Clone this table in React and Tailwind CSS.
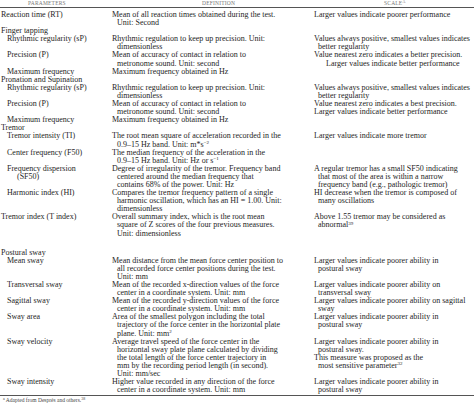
const rows = [
  { p: ["Reaction time (RT)"], lvl: 0, d: ["Mean of all reaction times obtained during the test.", "Unit: Second"], s: ["Larger values indicate poorer performance"] },
  { p: ["Finger tapping"], lvl: 0 },
  { p: ["Rhythmic regularity (sP)"], lvl: 1, d: ["Rhythmic regulation to keep up precision. Unit:", "dimensionless"], s: ["Values always positive, smallest values indicates", "better regularity"] },
  { p: ["Precision (P)"], lvl: 1, d: ["Mean of accuracy of contact in relation to", "metronome sound. Unit: second"], s: ["Value nearest zero indicates a better precision.", "Larger values indicate better performance"], sIndent: "pl-[12px]" },
  { p: ["Maximum frequency"], lvl: 1, d: ["Maximum frequency obtained in Hz"] },
  { p: ["Pronation and Supination"], lvl: 0 },
  { p: ["Rhythmic regularity (sP)"], lvl: 1, d: ["Rhythmic regulation to keep up precision. Unit:", "dimensionless"], s: ["Values always positive, smallest values indicates", "better regularity"] },
  { p: ["Precision (P)"], lvl: 1, d: ["Mean of accuracy of contact in relation to", "metronome sound. Unit: second"], s: ["Value nearest zero indicates a best precision.", "Larger values indicate better performance"], flat: true },
  { p: ["Maximum frequency"], lvl: 1, d: ["Maximum frequency obtained in Hz"] },
  { p: ["Tremor"], lvl: 0 },
  { p: ["Tremor intensity (TI)"], lvl: 1, d: ["The root mean square of acceleration recorded in the", <>0.9–15 Hz band. Unit: m*s<sup className="text-[5px]">−2</sup></>], s: ["Larger values indicate more tremor"] },
  { p: ["Center frequency (F50)"], lvl: 1, d: ["The median frequency of the acceleration in the", <>0.9–15 Hz band. Unit: Hz or s<sup className="text-[5px]">−1</sup></>] },
  { p: ["Frequency dispersion", "(SF50)"], lvl: 1, d: ["Degree of irregularity of the tremor. Frequency band", "centered around the median frequency that", "contains 68% of the power. Unit: Hz"], s: ["A regular tremor has a small SF50 indicating", "that most of the area is within a narrow", "frequency band (e.g., pathologic tremor)"] },
  { p: ["Harmonic index (HI)"], lvl: 1, d: ["Compares the tremor frequency pattern of a single", "harmonic oscillation, which has an HI = 1.00. Unit:", "dimensionless"], s: ["HI decrease when the tremor is composed of", "many oscillations"] },
  { p: ["Tremor index (T index)"], lvl: 0, d: ["Overall summary index, which is the root mean", "square of Z scores of the four previous measures.", "Unit: dimensionless"], s: ["Above 1.55 tremor may be considered as", <>abnormal<sup className="text-[5px]">39</sup></>] },
  { p: ["Postural sway"], lvl: 0, gap: true },
  { p: ["Mean sway"], lvl: 1, d: ["Mean distance from the mean force center position to", "all recorded force center positions during the test.", "Unit: mm"], s: ["Larger values indicate poorer ability in", "postural sway"] },
  { p: ["Transversal sway"], lvl: 1, d: ["Mean of the recorded x-direction values of the force", "center in a coordinate system. Unit: mm"], s: ["Larger values indicate poorer ability on", "transversal sway"] },
  { p: ["Sagittal sway"], lvl: 1, d: ["Mean of the recorded y-direction values of the force", "center in a coordinate system. Unit: mm"], s: ["Larger values indicate poorer ability on sagittal", "sway"] },
  { p: ["Sway area"], lvl: 1, d: ["Area of the smallest polygon including the total", "trajectory of the force center in the horizontal plate", <>plane. Unit: mm<sup className="text-[5px]">2</sup></>], s: ["Larger values indicate poorer ability in", "postural sway"] },
  { p: ["Sway velocity"], lvl: 1, d: ["Average travel speed of the force center in the", "horizontal sway plate plane calculated by dividing", "the total length of the force center trajectory in", "mm by the recording period length (in second).", "Unit: mm/sec"], s: ["Larger values indicate poorer ability in", "postural sway.", "This measure was proposed as the", <>most sensitive parameter<sup className="text-[5px]">32</sup></>], sRestart: 2 },
  { p: ["Sway intensity"], lvl: 1, d: ["Higher value recorded in any direction of the force", "center in a coordinate system. Unit: mm"], s: ["Larger values indicate poorer ability in", "postural sway"] },
];

function Lines({ items, indent = "pl-[5px]", restart, flat }) {
  if (!items) return <div />;
  return (
    <div>
      {items.map((t, i) => (
        <div key={i} className={`whitespace-nowrap ${i === 0 || i === restart || flat ? "" : indent}`}>{t}</div>
      ))}
    </div>
  );
}

export default function App() {
  return (
    <div className="w-[474px] h-[409px] bg-white overflow-hidden text-[#1e1e1e] text-[8px] leading-[8.1px]" style={{ fontFamily: '"Liberation Serif", "Times New Roman", serif' }}>
      <div className="grid grid-cols-[112px_202px_1fr] h-[8px] border-b border-[#555] text-[5.5px] leading-[6px] text-[#777] uppercase tracking-[0.2px]">
        <div className="pl-[28px]">Parameters</div>
        <div className="pl-[90px]">Definition</div>
        <div className="pl-[70px]">Scale<sup className="text-[4px]">a</sup></div>
      </div>
      <div className="pt-[3px] pb-[1px] border-b border-[#555]">
        {rows.map((r, i) => (
          <div key={i} className={`grid grid-cols-[112px_202px_1fr] ${r.gap ? "mt-[11px]" : ""}`}>
            <div className={r.lvl ? "pl-[7px]" : "pl-[1px]"}>
              <Lines items={r.p} indent="pl-[10px]" />
            </div>
            <Lines items={r.d} />
            <Lines items={r.s} indent={r.sIndent || "pl-[4px]"} restart={r.sRestart} flat={r.flat} />
          </div>
        ))}
      </div>
      <div className="pl-[3px] pt-[1px] text-[5.5px] leading-[7px] text-[#444]">
        <sup className="text-[4px]">a</sup> Adapted from Després and others.<sup className="text-[4px]">38</sup>
      </div>
    </div>
  );
}
